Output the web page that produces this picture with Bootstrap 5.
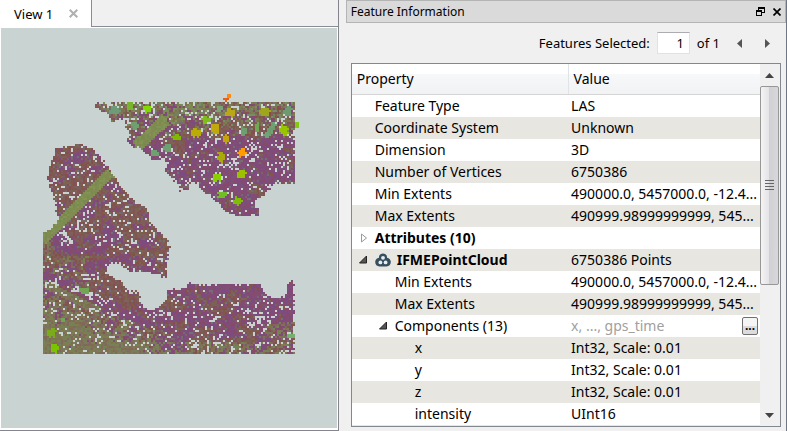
<!DOCTYPE html>
<html lang="en">
<head>
<meta charset="utf-8">
<meta name="viewport" content="width=device-width, initial-scale=1">
<title>Feature Information</title>
<link href="https://cdn.jsdelivr.net/npm/bootstrap@5.3.0/dist/css/bootstrap.min.css" rel="stylesheet">
<style>
  body { background: #f0f0f0; color: #000; font: 13px/20px "Noto Sans", "Open Sans", sans-serif; }
  button { color: inherit; }
  .view-side { flex: 339 1 0; min-width: 0; }
  .info-side { flex: 442 1 0; min-width: 0; border-right: 1px solid #6b7785; }
  .tab-strip { height: 27px; }
  .tab-item { width: 91px; background: #fff; padding-left: 14px; }
  .tab-rest { border-left: 1px solid #8b8b98; border-bottom: 1px solid #8b8b98; }
  .view-frame { background: #c8d3d2; border: 1px solid #fff; border-bottom-width: 2px; }
  .view-edge { border-right: 1px solid #85858f; border-bottom: 1px solid #85858f; }
  .side-gap { width: 7px; }
  .dock-title { height: 23px; background: #dadada; border: 1px solid #b4b4b4; padding: 0 4px; }
  .dock-title span { font-size: 12px; }
  .pick-bar { height: 40px; padding-right: 14px; }
  .pick-bar input { width: 33px; height: 22px; border: 1px solid #dfe2ea; border-top-color: #abadb3; background: #fff; padding: 0 5px; text-align: right; margin: 0 7px; }
  .tree-box { border: 1px solid #828790; margin: 0 5px 4px 5px; background: #e8e6e1; }
  .prop-table { table-layout: fixed; font-size: 14px; line-height: 22px; }
  .prop-table th:first-child { width: 53%; }
  .prop-table thead th { height: 30px; padding: 0 5px; font-weight: 400; background: linear-gradient(#fff 33%, #f7f8fa 33%, #f1f2f4); border-bottom: 1px solid #d5d5d5; }
  .prop-table thead th + th { border-left: 1px solid #e0e3e8; }
  .prop-table tbody td { height: 22px; padding: 0 0 0 3px; background: #fff; white-space: nowrap; overflow: hidden; }
  .prop-table tbody tr:nth-child(even) td { background: #e8e6e1; }
  .prop-table td.level-1 { padding-left: 23px; }
  .prop-table td.level-2 { padding-left: 43px; }
  .prop-table td.level-3 { padding-left: 63px; }
  .prop-table td.node-1 { padding-left: 7px; }
  .prop-table td.node-2 { padding-left: 27px; }
  .faded { color: #a0a0a0; }
  .twist { width: 16px; }
  .cloud-icon { margin-right: 6px; }
  .more-btn { width: 16px; height: 18px; border: 1px solid #707070; border-radius: 2px; background: linear-gradient(#f5f5f5 50%, #dcdcdc 50%); font-weight: 700; font-size: 12px; line-height: 12px; margin-right: 2px; }
  .scroll-rail { width: 20px; background: #f0f0f0; padding-right: 1px; }
  .rail-arrow { height: 22px; }
  .rail-thumb { flex: 197 1 0; border: 1px solid #979797; border-radius: 2px; background: linear-gradient(90deg, #f4f4f4, #e4e4e7 45%, #cfcfd4 46%, #d8d8dc); }
  .rail-gap { flex: 119 1 0; }
</style>
<script src="https://cdn.jsdelivr.net/npm/bootstrap@5.3.0/dist/js/bootstrap.bundle.min.js"></script>
</head>
<body>
<div class="d-flex vh-100 overflow-hidden">
  <main class="view-side view-edge d-flex flex-column">
    <div class="tab-strip d-flex flex-shrink-0">
      <div class="tab-item d-flex align-items-center">
        <span>View 1</span>
        <button class="btn p-0 border-0 d-flex ms-3" aria-label="Close view">
          <svg width="9" height="9" viewBox="0 0 9 9" stroke="#b0b0b0" stroke-width="2"><path d="M.7.7l7.6 7.6M8.3.7L.7 8.3"/></svg>
        </button>
      </div>
      <div class="tab-rest flex-grow-1"></div>
    </div>
    <div class="view-frame flex-grow-1 overflow-hidden">
      <svg id="cloud" width="334" height="396" viewBox="1 28 334 396" shape-rendering="crispEdges" role="img" aria-label="Point cloud"></svg>
    </div>
  </main>
  <div class="side-gap flex-shrink-0"></div>
  <aside class="info-side d-flex flex-column">
    <div class="dock-title d-flex align-items-center flex-shrink-0">
      <span class="me-auto">Feature Information</span>
      <button class="btn p-0 border-0 d-flex me-2" aria-label="Float">
        <svg width="9" height="9" viewBox="0 0 9 9" fill="none" stroke="#000" shape-rendering="crispEdges"><path d="M2.5 3V.5h6v5H6M2 1.5h7M.5 3.5h5v5h-5zM0 4.5h6"/></svg>
      </button>
      <button class="btn p-0 border-0 d-flex" aria-label="Close">
        <svg width="8" height="8" viewBox="0 0 8 8" stroke="#000" stroke-width="1.7"><path d="M.5.5l7 7M7.5.5l-7 7"/></svg>
      </button>
    </div>
    <div class="pick-bar d-flex align-items-center justify-content-end flex-shrink-0">
      <label for="pick">Features Selected:</label>
      <input id="pick" type="text" value="1">
      <span>of 1</span>
      <button class="btn p-0 border-0 d-flex ms-3" aria-label="Previous"><svg width="8" height="9" viewBox="0 0 8 9"><path d="M6 0v9L1 4.500z" fill="#555"/></svg></button>
      <button class="btn p-0 border-0 d-flex ms-3" aria-label="Next"><svg width="12" height="9" viewBox="0 0 12 9"><path d="M5 0v9l5-4.500z" fill="#555"/></svg></button>
    </div>
    <div class="tree-box d-flex flex-grow-1 overflow-hidden">
      <div class="flex-grow-1 overflow-hidden">
        <table class="prop-table w-100">
          <thead><tr><th scope="col">Property</th><th scope="col">Value</th></tr></thead>
          <tbody>
            <tr><td class="level-1">Feature Type</td><td>LAS</td></tr>
            <tr><td class="level-1">Coordinate System</td><td>Unknown</td></tr>
            <tr><td class="level-1">Dimension</td><td>3D</td></tr>
            <tr><td class="level-1">Number of Vertices</td><td>6750386</td></tr>
            <tr><td class="level-1">Min Extents</td><td>490000.0, 5457000.0, -12.4...</td></tr>
            <tr><td class="level-1">Max Extents</td><td>490999.98999999999, 545...</td></tr>
            <tr><td class="node-1"><div class="d-flex align-items-center"><svg class="twist" height="10" viewBox="0 0 16 10"><path d="M2.500 1v8L7.500 5z" fill="#fff" stroke="#999"/></svg><b>Attributes (10)</b></div></td><td></td></tr>
            <tr><td class="node-1"><div class="d-flex align-items-center"><svg class="twist" height="10" viewBox="0 0 16 10"><path d="M7.500 1v7H.5z" fill="#555" stroke="#222"/></svg>
              <svg class="cloud-icon" width="16" height="14" viewBox="0 0 16 14"><path d="M4 4.800C3.800 2 5.500.5 8 .5s4.200 1.500 4 4.300c2.400.3 3.800 2 3.800 4.300 0 2.700-1.700 4.400-4.300 4.400h-7C1.900 13.500.2 11.800.2 9.100.2 6.800 1.600 5.100 4 4.800z" fill="#344f60"/><g fill="#e8ecee"><circle cx="8" cy="4.800" r="1.900"/><circle cx="5.400" cy="9.400" r="1.900"/><circle cx="10.600" cy="9.400" r="1.900"/></g></svg><b>IFMEPointCloud</b></div></td><td>6750386 Points</td></tr>
            <tr><td class="level-2">Min Extents</td><td>490000.0, 5457000.0, -12.4...</td></tr>
            <tr><td class="level-2">Max Extents</td><td>490999.98999999999, 545...</td></tr>
            <tr><td class="node-2"><div class="d-flex align-items-center"><svg class="twist" height="10" viewBox="0 0 16 10"><path d="M7.500 1v7H.5z" fill="#555" stroke="#222"/></svg>Components (13)</div></td><td><div class="d-flex align-items-center justify-content-between"><span class="faded">x, ..., gps_time</span><button class="more-btn p-0 d-flex justify-content-center align-items-center" aria-label="Show components">...</button></div></td></tr>
            <tr><td class="level-3">x</td><td>Int32, Scale: 0.01</td></tr>
            <tr><td class="level-3">y</td><td>Int32, Scale: 0.01</td></tr>
            <tr><td class="level-3">z</td><td>Int32, Scale: 0.01</td></tr>
            <tr><td class="level-3">intensity</td><td>UInt16</td></tr>
          </tbody>
        </table>
      </div>
      <div class="scroll-rail d-flex flex-column flex-shrink-0">
        <div class="rail-arrow d-flex align-items-center justify-content-center"><svg width="9" height="5" viewBox="0 0 9 5"><path d="M0 5L4.500 0 9 5z" fill="#444"/></svg></div>
        <div class="rail-thumb d-flex align-items-center justify-content-center"><svg width="9" height="11" viewBox="0 0 9 11" stroke="#666" shape-rendering="crispEdges"><path d="M0 .5h9M0 3.500h9M0 6.500h9M0 9.500h9"/></svg></div>
        <div class="rail-gap"></div>
        <div class="rail-arrow d-flex align-items-center justify-content-center"><svg width="9" height="5" viewBox="0 0 9 5"><path d="M0 0L4.500 5 9 0z" fill="#444"/></svg></div>
      </div>
    </div>
  </aside>
</div>
<script>
(() => {
  const svg = document.getElementById('cloud');
  const upper = [[96,103],[295,102],[295,183],[275,183],[267,192],[255,202],[255,207],[260,210],[260,215],[235,216],[225,210],[215,200],[203,190],[196,183],[190,184],[187,191],[180,191],[178,185],[172,178],[165,170],[168,162],[160,158],[154,160],[148,155],[140,149],[134,146],[126,142],[131,135],[126,128],[125,120],[118,118],[112,122],[108,114],[97,109]];
  const lower = [[55,149],[67,146],[82,145],[92,150],[98,155],[108,167],[118,182],[130,197],[148,210],[150,222],[163,235],[170,245],[168,257],[167,277],[158,275],[147,272],[130,271],[120,263],[108,263],[106,275],[118,278],[127,290],[138,292],[142,305],[150,311],[158,308],[166,300],[167,290],[185,288],[190,282],[197,285],[260,284],[268,297],[285,298],[289,281],[294,280],[294,354],[43,354],[43,233],[58,223],[55,202],[52,192],[47,182],[51,165]];
  const gap = [[60,233],[66,231],[68,235],[73,242],[72,244],[66,237]];
  // Trees and bright returns: x, y, radius x, radius y, colour
  const blobs = [[115,111,6,5,'#6f9a78'],[130,106,4,4,'#79b52c'],[147,109,5,4,'#80d800'],[176,138,5,4,'#83b800'],[167,148,5,4,'#6fa070'],[154,153,5,4,'#6fa070'],[135,126,4,5,'#6fa070'],[196,133,6,5,'#b9ac08'],[215,129,5,6,'#c1a80c'],[206,120,5,4,'#7fbd1d'],[230,113,5,5,'#b8a719'],[226,139,4,4,'#c4a50b'],[242,153,5,5,'#ff9c00'],[221,157,4,6,'#aaa90b'],[241,174,5,5,'#9dc000'],[217,177,5,5,'#8ad000'],[222,195,5,4,'#70bd25'],[238,201,5,5,'#80bd08'],[265,112,6,5,'#9fa61c'],[284,130,5,6,'#99c500'],[257,127,3,6,'#70a854'],[244,132,4,5,'#6f9f6e'],[288,111,5,5,'#6f9a70'],[52,333,5,5,'#79ac18'],[55,348,4,5,'#7cc300'],[63,320,3,3,'#6fa656'],[84,291,5,4,'#72a554'],[226,99,3,2,'#ee5c10'],[229,96,3,3,'#fa8a10'],[297,125,2,4,'#83ca10'],[291,336,5,2,'#74b16e'],[219,109,4,4,'#7ba174']];
  const browns = ['#82504f', '#7f5a4b', '#84545a', '#7d6350', '#7a5f5d'];
  const plums = ['#844a6a', '#804a7c', '#874a70', '#7c5078', '#7a4c82'];
  const greys = ['#746a72', '#7a6668', '#736f78'];
  const greens = ['#7b7d52', '#7f7555', '#728060', '#80704e', '#788c65'];
  const rest = ['#7d7c52', '#7f7250', '#7c7360', '#748254', '#80685a'];
  const ribbon = ['#7d8f50', '#829354', '#79894f', '#828a52'];
  let seed = 4711;
  const rnd = () => (seed = (seed * 16807) % 2147483647) / 2147483647;
  const hash = (i, j) => { const v = Math.sin(i * 127.1 + j * 311.7) * 43758.5; return v - Math.floor(v); };
  const noise = (x, y) => {
    const i = Math.floor(x), j = Math.floor(y), u = x - i, v = y - j;
    const a = hash(i, j) * (1 - u) + hash(i + 1, j) * u, b = hash(i, j + 1) * (1 - u) + hash(i + 1, j + 1) * u;
    return a * (1 - v) + b * v;
  };
  const inside = (x, y, p) => {
    let hit = false;
    for (let i = 0, j = p.length - 1; i < p.length; j = i++)
      if ((p[i][1] > y) !== (p[j][1] > y) && x < (p[j][0] - p[i][0]) * (y - p[i][1]) / (p[j][1] - p[i][1]) + p[i][0]) hit = !hit;
    return hit;
  };
  const strip = (x, y, x1, y1, x2, y2, w) => {
    const dx = x2 - x1, dy = y2 - y1, t = ((x - x1) * dx + (y - y1) * dy) / (dx * dx + dy * dy);
    return t >= 0 && t <= 1 && Math.hypot(x - x1 - t * dx, y - y1 - t * dy) < w;
  };
  const pick = list => list[Math.floor(rnd() * list.length)];
  const colour = (x, y) => {
    for (const b of blobs) if (((x - b[0]) / b[2]) ** 2 + ((y - b[1]) / b[3]) ** 2 < .5 + rnd() * .6) return b[4];
    const jx = x + rnd() * 2 - 1, jy = y > 350 ? y : y + rnd() * 2 - 1;
    if (!(inside(jx, jy, upper) || inside(jx, jy, lower)) || inside(x, y, gap)) return null;
    const north = x > 95 && inside(x, y, upper);
    if (strip(x, y, 42, 240, 111, 173, 5)) return pick(ribbon);
    if (strip(x, y, 136, 147, 166, 119, 6)) return pick(ribbon);
    if (strip(x, y, 266, 137, 275, 123, 3)) return pick(['#709b70', '#6fa477']);
    const sparse = noise(x / 9, y / 5);
    const open = (y > 284 && y < 295 && x > 175) || (y > 240 && y < 278 && x < 110 && sparse < .7);
    if (rnd() < (open ? .02 : .03 + sparse * sparse * .34)) return null;
    if (strip(x, y, 165, 119, 205, 104, 8) && rnd() < .65) return pick(ribbon.concat(greens));
    if (strip(x, y, 44, 275, 150, 326, 4) && rnd() < .8) return pick(plums);
    if (strip(x, y, 44, 284, 100, 312, 4)) return pick(rest);
    let green;
    if (north) green = (140 - y) / 45;
    else green = y > 285 ? (y - 283 - (x - 43) * .36) / 26 : 0;
    if (!north && y > 341) green = Math.max(green, .65);
    if (!north && x < 52 && y > 240 && y < 262) green = .6;
    if (!north && x > 262 && y > 322 && y < 338) green = .6;
    if (!north && x > 52 && x < 90 && y > 256 && y < 292) green = .45;
    const n = noise(x / 10 + 30, y / 6) + rnd() * .3 - .15;
    if (rnd() < green * (.5 + n * .8) * .85) return pick(north ? greens : rest);
    let plum = .48;
    if (north && y > 138) plum = .75;
    if (!north && y > 283 && y < 298 && x > 180) plum = .8;
    if (!north && y < 225) plum = .3;
    if (!north && y > 298 && y < 325 && x > 240) plum = .7;
    if (rnd() < .07) return pick(greys);
    return n < plum ? pick(plums) : pick(browns);
  };
  const paths = {};
  for (let y = 92; y < 355; y += 2)
    for (let x = 43; x < 300; x += 2) {
      const c = colour(x + 1, y + 1);
      if (!c) continue;
      paths[c] = (paths[c] || '') + `M${x} ${y}h2v2h-2z`;
    }
  for (const c in paths) {
    const p = document.createElementNS('http://www.w3.org/2000/svg', 'path');
    p.setAttribute('fill', c);
    p.setAttribute('d', paths[c]);
    svg.append(p);
  }
})();
</script>
</body>
</html>
